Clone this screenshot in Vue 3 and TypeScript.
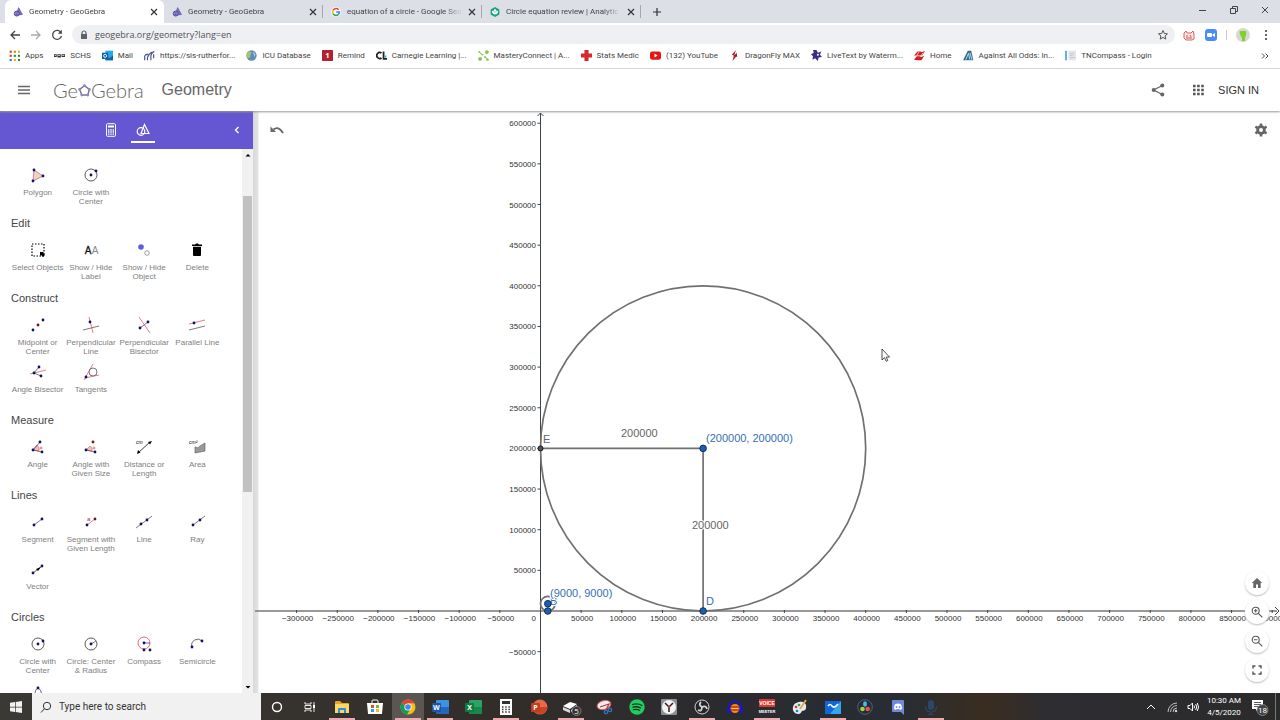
<script setup lang="ts">
import { ref } from 'vue'

interface Tool { label: string; icon: string }
interface Section { title: string; tools: Tool[] }
interface Tab { title: string; icon: string; active?: boolean; divider?: boolean }
interface Bookmark { label: string; icon: string }
interface TaskItem { name: string; icon: string; running?: boolean; focused?: boolean }

const address = ref('geogebra.org/geometry?lang=en')
const query = ref('')

/* ---------- browser tabs ---------- */
const geoIcon =
  '<path d="M9 1 15 12 5 13Z" fill="#7b72c4"/><circle cx="6" cy="10.500" r="4" fill="#8f88cf" stroke="#4b4392" stroke-width="1.500"/><path d="M9 1 15 12 5 13Z" fill="none" stroke="#5d54a6" stroke-width="1.200"/>'
const tabs: Tab[] = [
  { title: 'Geometry - GeoGebra', icon: geoIcon, active: true },
  { title: 'Geometry - GeoGebra', icon: geoIcon, divider: true },
  {
    title: 'equation of a circle - Google Search',
    divider: true,
    icon: '<circle cx="8" cy="8" r="8" fill="#fff"/><g fill="none" stroke-width="2.600"><path d="M12.200 4.300A5.500 5.500 0 0 0 3.300 5.200" stroke="#ea4335"/><path d="M3.300 5.200a5.500 5.500 0 0 0 0 5.600" stroke="#fbbc05"/><path d="M3.300 10.800a5.500 5.500 0 0 0 8.300 1.300" stroke="#34a853"/><path d="M11.600 12.100A5.500 5.500 0 0 0 13.500 8H8.200" stroke="#4285f4"/></g>',
  },
  {
    title: 'Circle equation review | Analytic geometry',
    divider: true,
    icon: '<path d="M8 0 15 4v8l-7 4-7-4V4Z" fill="#14a87c"/><circle cx="8" cy="5.500" r="2" fill="#fff"/><path d="M3 6c0 4 2 6 5 6s5-2 5-6c-3 0-5 1.500-5 4 0-2.500-2-4-5-4Z" fill="#fff"/>',
  },
]

/* ---------- bookmarks ---------- */
const dots = ['#d93025', '#e8710a', '#f9ab00', '#d93025', '#1e8e3e', '#1e8e3e', '#1a73e8', '#f9ab00', '#1e8e3e']
  .map((c, i) => `<rect x="${1 + (i % 3) * 6}" y="${1 + Math.floor(i / 3) * 6}" width="3" height="3" fill="${c}"/>`)
  .join('')
const bookmarks: Bookmark[] = [
  { label: 'Apps', icon: dots },
  { label: 'SCHS', icon: '<path d="M0 6h4v4H0zM5 6h5v5H5zM11 6h5v4h-5z" fill="#333"/><path d="M1 8h2M6 8h3M12 8h3" stroke="#fff"/>' },
  { label: 'Mail', icon: '<rect x="5" y="1" width="11" height="14" fill="#28a8ea"/><path d="m5 8 5.500 4L16 8v7H5Z" fill="#14649e"/><rect x="0" y="4" width="9" height="9" fill="#0a64ad"/><circle cx="4.500" cy="8.500" r="2.200" fill="none" stroke="#fff" stroke-width="1.300"/>' },
  { label: 'https://sis-rutherfor...', icon: '<path d="M1 15V9q1-3 5-3M5 15v-4q2-6 7-8M10 15V8q1-4 5-6M14 12V6" fill="none" stroke="#4c538f" stroke-width="1.700"/>' },
  { label: 'ICU Database', icon: '<circle cx="8" cy="8" r="7.500" fill="#5f8fb5"/><path d="M4 2c4 0 5 2 3 4s1 3-2 5-4-2-4-5Z" fill="#a6c66a"/><path d="M10 3c3 1 4 4 3 7Z" fill="#c6dff0"/>' },
  { label: 'Remind', icon: '<rect width="16" height="16" rx="1" fill="#b5202e"/><text x="8" y="12" text-anchor="middle" font-size="11" font-weight="700" font-family="Open Sans, sans-serif" fill="#fff">1</text>' },
  { label: 'Carnegie Learning |...', icon: '<path d="M8 4.500A4.300 4.300 0 1 0 8 11.500" fill="none" stroke="#222" stroke-width="2.600"/><path d="M11 2v11h5" fill="none" stroke="#222" stroke-width="2.600"/><rect x="12" y="8" width="3" height="3" fill="#3fa9dd"/>' },
  { label: 'MasteryConnect | A...', icon: '<g fill="#8cc152"><circle cx="2" cy="3" r="1.500"/><circle cx="13" cy="3" r="2.800"/><circle cx="3" cy="13" r="2.800"/><circle cx="14" cy="14" r="1.800"/><circle cx="7" cy="7" r="1.200"/><circle cx="10" cy="10" r="1.200"/></g><path d="m3 4 3 3M10 10l4 4" stroke="#8cc152" stroke-width="1.500"/>' },
  { label: 'Stats Medic', icon: '<path d="M5 0h6v5h5v6h-5v5H5v-5H0V5h5Z" fill="#d8292f"/>' },
  { label: '(132) YouTube', icon: '<rect y="2" width="16" height="12" rx="3" fill="#e81313"/><path d="m6.500 5 4.500 3-4.500 3Z" fill="#fff"/>' },
  { label: 'DragonFly MAX', icon: '<path d="M10 0 4 7l3 1-2 8 6-7-3-2Z" fill="#c4202d"/><path d="M11 4 8 8l4 2Z" fill="#7d1820"/>' },
  { label: 'LiveText by Waterm...', icon: '<path d="m8 0 2 4 5-2-2 5 3 3-5 1-1 5-4-4-4 2 1-5-3-3 4-2-1-4Z" fill="#3b2c84"/><circle cx="10" cy="7" r="1.500" fill="#fff"/>' },
  { label: 'Home', icon: '<path d="M0 8 5 2h4l3 1 4-2-4 7H0ZM0 14l4-5h4l3 1 4-2-4 7H5Z" fill="#cf2121"/><path d="m4 8 3-5M10 9l3-5" stroke="#fff"/>' },
  { label: 'Against All Odds: In...', icon: '<path d="M0 15 7 1h5l3 14Z" fill="#2f6c95"/><path d="m4 14 4-9 2 9M10 4l3 10" stroke="#cfe3ef" stroke-width="1.300" fill="none"/>' },
  { label: 'TNCompass - Login', icon: '<rect x="0" y="1" width="3" height="14" fill="#67b4d3"/><rect x="5" y="1" width="11" height="14" fill="#e3e5e8"/><path d="M7 5h6M7 8h4M7 11h7" stroke="#b6bac0"/>' },
]

/* ---------- construction tools ---------- */
const dot = (x: number, y: number, c = '#11116b') => `<circle cx="${x}" cy="${y}" r="1.400" fill="${c}"/>`
const line = (x1: number, y1: number, x2: number, y2: number, c = '#444') =>
  `<path d="M${x1} ${y1}L${x2} ${y2}" stroke="${c}" stroke-width=".7"/>`
const ring = (r: number, c = '#333') => `<circle r="${r}" fill="none" stroke="${c}" stroke-width=".8"/>`
const red = '#cf4a5c'

const sections: Section[] = [
  {
    title: '',
    tools: [
      { label: 'Polygon', icon: '<path d="M-4-5 5 1-5 6Z" fill="#f3d1cb" stroke="#a5645c" stroke-width=".7"/>' + dot(-4, -5) + dot(5, 1) + dot(-5, 6) },
      { label: 'Circle with Center', icon: ring(6) + dot(0, 0) + dot(5, -4) },
    ],
  },
  {
    title: 'Edit',
    tools: [
      { label: 'Select Objects', icon: '<rect x="-6" y="-6" width="12" height="12" fill="none" stroke="#000" stroke-width="1.200" stroke-dasharray="1.500 1.500"/><path d="M2 2h4L5 3l2 2-2 2-2-2-1 1Z"/>' },
      { label: 'Show / Hide Label', icon: '<g font-family="Liberation Sans, sans-serif" font-size="10" text-anchor="middle"><text x="-3" y="4" fill="#111" stroke="#111" stroke-width=".3">A</text><text x="4" y="4" fill="#888">A</text></g>' },
      { label: 'Show / Hide Object', icon: '<circle cx="-3" cy="-3" r="2.800" fill="#5f5fdd"/><circle cx="3" cy="3" r="2.300" fill="#fff" stroke="#777" stroke-width=".7"/>' },
      { label: 'Delete', icon: '<path d="M-5-5.500h3l1-1h2l1 1h3v1.500H-5ZM-4-3.300h8V5q0 1-1 1h-6q-1 0-1-1Z"/>' },
    ],
  },
  {
    title: 'Construct',
    tools: [
      { label: 'Midpoint or Center', icon: dot(-5, 5) + dot(0, 0, '#6b1722') + dot(5, -5) },
      { label: 'Perpendicular Line', icon: line(-8, 5, 8, 1) + line(-2, -8, 2, 8, red) + dot(-1, -3) },
      { label: 'Perpendicular Bisector', icon: line(-4, 3, 4, -3) + line(-5, -8, 6, 8, red) + dot(-4, 3) + dot(4, -3) },
      { label: 'Parallel Line', icon: line(-8, 5, 8, 1) + line(-8, -1, 8, -5, red) + dot(-3, -2) },
      { label: 'Angle Bisector', icon: line(-4, 1, 1, -5) + line(-4, 1, 3, 4) + line(-8, 2, 8, -2, red) + dot(-4, 1) + dot(1, -5) + dot(3, 4) },
      { label: 'Tangents', icon: '<circle cx="2" cy="0" r="4" fill="none" stroke="#555" stroke-width=".8"/>' + line(-7, 8, 2, -8, red) + line(-6, 6, 8, 3, red) + dot(-5, 5) },
    ],
  },
  {
    title: 'Measure',
    tools: [
      { label: 'Angle', icon: '<path d="M-5 3-1-2Q2 1 1 4Z" fill="#f5bfc1" stroke="#d15763" stroke-width=".6"/>' + line(-5, 3, 2, -5) + line(-5, 3, 4, 5) + dot(-5, 3) + dot(2, -5) + dot(4, 5) + '<circle cx="3" cy="1" r="1" fill="none" stroke="#c33" stroke-width=".6"/>' },
      { label: 'Angle with Given Size', icon: '<path d="M-5 3-1-1Q2 1 1 4Z" fill="#f5bfc1" stroke="#d15763" stroke-width=".6"/>' + line(-5, 3, 4, 5) + dot(-5, 3) + dot(2, -5, '#7e1020') + dot(4, 5) + '<circle cx="3" cy="1" r="1" fill="none" stroke="#c33" stroke-width=".6"/>' },
      { label: 'Distance or Length', icon: '<path d="M-6 6 6-5" stroke="#111" stroke-width=".8"/><path d="m-7 7 1-4 2.500 2.500ZM8-6 4-5l2 2.500Z"/><text x="-8" y="-3" font-family="Liberation Sans, sans-serif" font-size="5" font-style="italic">cm</text>' },
      { label: 'Area', icon: '<path d="M-2 0q3 2 5-1l5-3v8l-10 2Z" fill="#9a9a9a" stroke="#555" stroke-width=".6"/><text x="-8" y="-3" font-family="Liberation Sans, sans-serif" font-size="5" font-style="italic">cm²</text>' },
    ],
  },
  {
    title: 'Lines',
    tools: [
      { label: 'Segment', icon: line(-4, 3, 4, -3) + dot(-4, 3) + dot(4, -3) },
      { label: 'Segment with Given Length', icon: line(-4, 3, 4, -3, red) + dot(-4, 3) + dot(4, -3, '#7e1020') + '<text x="-4" y="-1" font-family="Liberation Sans, sans-serif" font-size="6" fill="#a33">a</text>' },
      { label: 'Line', icon: line(-8, 6, 8, -6) + dot(-3, 2) + dot(3, -2) },
      { label: 'Ray', icon: line(-4, 3, 8, -6) + dot(-4, 3) + dot(3, -2) },
      { label: 'Vector', icon: line(-5, 4, 4, -3, '#111') + '<path d="m3-2-5 2 2 2Z"/>' + dot(-5, 4) + dot(4, -3) },
    ],
  },
  {
    title: 'Circles',
    tools: [
      { label: 'Circle with Center', icon: ring(6) + dot(0, 0) + dot(5, -3) },
      { label: 'Circle: Center & Radius', icon: ring(6) + line(0, 0, 5, -3) + dot(0, 0) },
      { label: 'Compass', icon: '<circle cy="-1" r="6" fill="none" stroke="#d65f6e" stroke-width=".9"/>' + line(0, -1, 6, -1, '#22b') + dot(0, -1) + dot(0, 6) + dot(6, 6) },
      { label: 'Semicircle', icon: '<path d="M-5 3A6 6 0 0 1 5-3" fill="none" stroke="#444" stroke-width=".8"/>' + dot(-5, 3) + dot(5, -3) },
      { label: 'Circumcircular Arc', icon: '<path d="M-3 4Q-3-2 0-3 3-2 4 4" fill="none" stroke="#444" stroke-width=".8"/>' + dot(0, -3) },
    ],
  },
]

/* ---------- graphics view ---------- */
const origin = { x: 287.5, y: 500 }
const step = 40.65
const px = (v: number) => origin.x + (v / 50000) * step
const py = (v: number) => origin.y - (v / 50000) * step
const minus = (v: number) => (v < 0 ? '−' + -v : String(v))
const xTicks = Array.from({ length: 25 }, (_, i) => (i - 6) * 50000).filter((v) => v !== 0)
const yTicks = Array.from({ length: 14 }, (_, i) => (i - 1) * 50000).filter((v) => v !== 0)

/* ---------- taskbar ---------- */
const officeTile = (letter: string, dark: string, light: string) =>
  `<rect x="4" y="1" width="13" height="14" rx="1" fill="${light}"/><path d="M4 8h13v6q0 1-1 1H5q-1 0-1-1Z" fill="${dark}" opacity=".7"/><rect x="0" y="4" width="9" height="9" rx="1" fill="${dark}"/><text x="4.500" y="11" text-anchor="middle" font-size="7" font-weight="700" font-family="Open Sans, sans-serif" fill="#fff">${letter}</text>`
const taskItems: TaskItem[] = [
  { name: 'Cortana', icon: '<circle cx="8" cy="8" r="4.500" fill="none" stroke="#fff" stroke-width="1.400"/>' },
  { name: 'Task View', icon: '<path d="M3 3v2h6V3M3 13v-2h6v2M3 6.500h6v3H3ZM12 3v10" fill="none" stroke="#e8e8e8"/><path d="M11 6h2v3h-2z" fill="#fff"/>' },
  { name: 'File Explorer', running: true, icon: '<path d="M1 3q0-1 1-1h4l2 2h6q1 0 1 1v8H1Z" fill="#e5a51f"/><rect x="1" y="5" width="14" height="9" fill="#fbd767"/><path d="M4 14v-4q0-1 1-1h6q1 0 1 1v4h-2v-3H6v3Z" fill="#2f8fd6"/>' },
  { name: 'Microsoft Store', icon: '<path d="M5 4V2q0-1 1-1h4q1 0 1 1v2" fill="none" stroke="#fff"/><path d="M0 4h16l-1 11H1Z" fill="#fff"/><path d="M4 6h3v3H4z" fill="#e1512b"/><path d="M9 6h3v3H9z" fill="#7db928"/><path d="M4 10h3v3H4z" fill="#2b9fe2"/><path d="M9 10h3v3H9z" fill="#f4b71d"/>' },
  { name: 'Google Chrome', running: true, focused: true, icon: '<circle cx="8" cy="8" r="7.500" fill="#f4c20d"/><path d="M8 8 1.500 4.200A7.500 7.500 0 0 1 14.500 4.300H8Z" fill="#db4437"/><path d="M8 8 1.500 4.200A7.500 7.500 0 0 0 7 15.400L10.500 10Z" fill="#0f9d58"/><circle cx="8" cy="8" r="3.600" fill="#fff"/><circle cx="8" cy="8" r="2.800" fill="#4285f4"/>' },
  { name: 'Word', running: true, icon: officeTile('W', '#1c55a8', '#3b93e4') },
  { name: 'Excel', icon: officeTile('X', '#107c41', '#28a467') },
  { name: 'Calculator', running: true, icon: '<rect x="2" y="0" width="12" height="16" fill="#fff"/><path d="M4 2h8v3H4z" fill="#333"/><path d="M4 8h8M4 10.500h8M4 13h8" stroke="#333" stroke-width="1.500" stroke-dasharray="1.500 1.700"/>' },
  { name: 'PowerPoint', icon: '<circle cx="9" cy="8" r="7.500" fill="#e8694a"/><path d="M9 8h7.500A7.500 7.500 0 0 1 3 12Z" fill="#c8432a"/><rect x="0" y="4" width="9" height="9" rx="1" fill="#c43e1c"/><text x="4.500" y="11" text-anchor="middle" font-size="7" font-weight="700" font-family="Open Sans, sans-serif" fill="#fff">P</text>' },
  { name: 'Document Camera', running: true, icon: '<path d="m0 7 7-4 7 2-7 5Z" fill="#fff"/><path d="m0 8 7 3v3l-7-3ZM8 11l6-5v2l-6 5Z" fill="#d8d8d8"/><circle cx="13.500" cy="12" r="4.500" fill="#333" stroke="#999" stroke-width=".7"/><text x="13.500" y="15" text-anchor="middle" font-size="8" font-family="Open Sans, sans-serif" fill="#fff">5</text>' },
  { name: 'Snipping Tool', icon: '<ellipse cx="8" cy="6" rx="7" ry="4.500" fill="#eee" stroke="#d4585d" transform="rotate(-15 8 6)"/><path d="m4 8 9-3-3 6" stroke="#b9343f" stroke-width="1.300" fill="none"/><circle cx="10" cy="13" r="1.700" fill="none" stroke="#2e74b8" stroke-width="1.300"/><circle cx="14" cy="11" r="1.700" fill="none" stroke="#2e74b8" stroke-width="1.300"/>' },
  { name: 'Spotify', icon: '<circle cx="8" cy="8" r="7.700" fill="#1fce5f"/><path d="M3.500 5.500q5-1.500 9.500 1M4 8.200q4-1.200 7.500.8M4.500 10.700q3.500-1 6 .6" fill="none" stroke="#10311d" stroke-width="1.300" stroke-linecap="round"/>' },
  { name: 'Clock', icon: '<rect width="16" height="16" rx="1" fill="#8c8f94"/><circle cx="8" cy="8" r="7" fill="#f3f3f3"/><path d="m4 4 4 4 4-4M8 8v5" fill="none" stroke="#222" stroke-width="1.500"/><circle cx="8" cy="8" r="1.200" fill="#c33"/>' },
  { name: 'OBS Studio', running: true, icon: '<circle cx="8" cy="8" r="7" fill="#262629" stroke="#d5d5d5"/><path d="M8 8Q4 6 7 3M8 8q4-2 5 2M8 8q0 5-4 3" fill="none" stroke="#d5d5d5" stroke-width="1.800"/>' },
  { name: 'Audacity', icon: '<path d="M2 11V8a6 6 0 0 1 12 0v3" fill="none" stroke="#1717c9" stroke-width="2"/><rect x="0" y="8" width="4" height="6" rx="1" fill="#1717c9"/><rect x="12" y="8" width="4" height="6" rx="1" fill="#1717c9"/><circle cx="8" cy="9.500" r="4.500" fill="#f28b17"/><path d="M4 8h8M4 11h8" stroke="#d82a17" stroke-width="1.500"/><path d="M5 9.500h6" stroke="#ffe14a"/>' },
  { name: 'VoiceMeeter', running: true, icon: '<rect width="16" height="8" fill="#d93a2b"/><rect y="8" width="16" height="8" fill="#292c32"/><g font-family="Liberation Sans, sans-serif" font-weight="700" text-anchor="middle" fill="#fff"><text x="8" y="6" font-size="5">VOICE</text><text x="8" y="14" font-size="4">MEETER</text></g>' },
  { name: 'Paint', icon: '<path d="M7 3c5-1 8 2 7 6s-3 2-4 3-1 3-4 3-6-3-5-7 3-4 6-5Z" fill="#e2edf0"/><circle cx="4" cy="8" r="1.300" fill="#d33"/><circle cx="7" cy="6" r="1.300" fill="#3a9e4c"/><circle cx="5" cy="12" r="1.300" fill="#2b74cf"/><path d="m8 10 6-9" stroke="#e0a84c" stroke-width="1.800"/>' },
  { name: 'Whiteboard', running: true, icon: '<rect y="2" width="16" height="13" fill="#1267d8"/><path d="M16 2v13H5Z" fill="#34a6ee"/><path d="M3 7q2-3 4 0t6-2" fill="none" stroke="#fff" stroke-width="1.500"/>' },
  { name: 'DaVinci Resolve', icon: '<circle cx="8" cy="8" r="7.300" fill="#232c38" stroke="#56606e"/><ellipse cx="8" cy="5" rx="2" ry="2.700" fill="#50b6e5"/><circle cx="5.500" cy="10" r="2.300" fill="#a9cf45"/><circle cx="10.700" cy="10" r="2.300" fill="#e0574b"/>' },
  { name: 'Discord', icon: '<path d="M3 1h10q1 0 1 1v14l-3-3H3q-1 0-1-1V2q0-1 1-1Z" fill="#7289da"/><path d="M4 10q0-4 1.500-5 2.500-.8 5 0Q12 6 12 10l-2 1-.7-1H6.700L6 11Z" fill="#fff"/><circle cx="6.500" cy="8" r=".9" fill="#7289da"/><circle cx="9.500" cy="8" r=".9" fill="#7289da"/>' },
  { name: 'Voice Recorder', running: true, icon: '<rect x="5" y="1" width="6" height="10" rx="3" fill="#2c4763"/><path d="M2.500 7q0 6 5.500 6t5.500-6M8 13v3M5 15.500h6" fill="none" stroke="#2c4763" stroke-width="1.200"/>' },
]
</script>

<template>
  <div class="screen">
    <nav class="tab-strip" aria-label="Browser tabs">
      <div v-for="(t, i) in tabs" :key="i" class="tab" :class="{ active: t.active, divider: t.divider }">
        <svg class="favicon" viewBox="0 0 16 16" v-html="t.icon" />
        <a class="tab-title" href="#">{{ t.title }}</a>
        <button class="tab-close" aria-label="Close tab">
          <svg viewBox="0 0 8 8"><path d="m1 1 6 6M7 1 1 7" /></svg>
        </button>
      </div>
      <button class="new-tab" aria-label="New tab">
        <svg viewBox="0 0 10 10"><path d="M5 1v8M1 5h8" /></svg>
      </button>
      <div class="window-controls">
        <button aria-label="Minimize"><svg viewBox="0 0 10 10"><path d="M1 5.500h7" /></svg></button>
        <button aria-label="Restore"><svg viewBox="0 0 10 10"><path d="M1.500 3.500h5v5h-5zM3.500 3V1.500h5v5H7" /></svg></button>
        <button aria-label="Close"><svg viewBox="0 0 10 10"><path d="m2 2 6 6M8 2 2 8" /></svg></button>
      </div>
    </nav>

    <div class="toolbar">
      <button class="nav-button" aria-label="Back"><svg viewBox="0 0 12 12"><path d="M11 6H2M6 2 2 6l4 4" /></svg></button>
      <button class="nav-button faded" aria-label="Forward"><svg viewBox="0 0 12 12"><path d="M1 6h9M6 2l4 4-4 4" /></svg></button>
      <button class="nav-button" aria-label="Reload">
        <svg viewBox="0 0 12 12"><path d="M10 3.500A4.500 4.500 0 1 0 10.500 7" /><path d="M10.800.8v4H6.800Z" class="solid" /></svg>
      </button>
      <div class="omnibox">
        <svg class="lock" viewBox="0 0 10 10"><path d="M3 4V3a2 2 0 0 1 4 0v1" fill="none" stroke="#5f6368" stroke-width="1.200" /><rect x="2" y="4" width="6" height="5" fill="#5f6368" /></svg>
        <input v-model="address" type="text" aria-label="Address" />
        <button class="star" aria-label="Bookmark this page">
          <svg viewBox="0 0 12 12"><path d="m6 1.500 1.300 3 3.200.3-2.400 2.100.7 3.200L6 8.400l-2.800 1.700.7-3.200-2.400-2.100 3.200-.3Z" /></svg>
        </button>
      </div>
      <div class="extensions">
        <button aria-label="Extension">
          <svg viewBox="0 0 12 12"><path d="M1 4l2-2 1 2h4l2-2 1 3v5l-2 1H3l-2-2Z" fill="#fae9e8" stroke="#d1504d" stroke-width=".9" /><path d="M4 6v2M7 6l1 2M3 9h6" stroke="#d1504d" /></svg>
        </button>
        <button aria-label="Zoom meeting">
          <svg viewBox="0 0 12 12"><rect width="12" height="12" rx="3" fill="#4a8cf5" /><rect x="2" y="4" width="5" height="4" rx="1" fill="#fff" /><path d="m7.500 5.500 2.500-1.500v4L7.500 6.500Z" fill="#fff" /></svg>
        </button>
        <i class="rule"></i>
        <button class="avatar" aria-label="Profile">
          <svg viewBox="0 0 14 14"><circle cx="7" cy="7" r="7" fill="#d5d7d5" /><path d="M4 3h6q1 3-1 7v3H6v-3Q3 6 4 3Z" fill="#7ed321" /></svg>
        </button>
        <button aria-label="Menu">
          <svg viewBox="0 0 12 12"><circle cx="6" cy="2" r="1.100" fill="#444" /><circle cx="6" cy="6" r="1.100" fill="#444" /><circle cx="6" cy="10" r="1.100" fill="#444" /></svg>
        </button>
      </div>
    </div>

    <nav class="bookmarks" aria-label="Bookmarks">
      <a v-for="b in bookmarks" :key="b.label" href="#"><svg viewBox="0 0 16 16" v-html="b.icon" /><span>{{ b.label }}</span></a>
      <button class="more" aria-label="More bookmarks"><svg viewBox="0 0 8 8"><path d="m1 1.500 2.500 2.500L1 6.500M4.500 1.500 7 4 4.500 6.500" /></svg></button>
    </nav>

    <header class="app-header">
      <button class="menu" aria-label="Menu"><svg viewBox="0 0 12 10"><path d="M0 1.500h12M0 5h12M0 8.500h12" /></svg></button>
      <a class="logo" href="#" aria-label="GeoGebra">
        <span>Ge</span>
        <svg viewBox="0 0 12 12"><path d="M6 1.500 10.500 5 9 10.200H3.500L1.500 5Z" fill="none" stroke="#777" stroke-width="1.300" /><g fill="#8c84dc"><circle cx="6" cy="1.500" r="1.300" /><circle cx="10.500" cy="5" r="1.300" /><circle cx="9" cy="10.200" r="1.300" /><circle cx="3.500" cy="10.200" r="1.300" /><circle cx="1.500" cy="5" r="1.300" /></g></svg>
        <span>Gebra</span>
      </a>
      <h1>Geometry</h1>
      <div class="header-actions">
        <button aria-label="Share">
          <svg viewBox="0 0 14 14"><path d="m11.500 2.500-9 4.500 9 4.500" fill="none" stroke="#666" stroke-width="1.300" /><g fill="#666"><circle cx="11.300" cy="2.500" r="2" /><circle cx="2.700" cy="7" r="2" /><circle cx="11.300" cy="11.500" r="2" /></g></svg>
        </button>
        <button class="apps" aria-label="Apps">
          <svg viewBox="0 0 14 14"><path d="M2 3h11M2 7h11M2 11h11" stroke="#555" stroke-width="2.600" stroke-dasharray="2.600 1.500" /></svg>
        </button>
        <a class="sign-in" href="#">SIGN IN</a>
      </div>
    </header>

    <main class="workspace">
      <aside class="sidebar">
        <div class="sidebar-head">
          <button class="view-tab" aria-label="Algebra">
            <svg viewBox="0 0 14 14"><rect x="2.500" y=".7" width="9" height="12.600" rx="1" fill="none" stroke="#fff" /><path d="M4 2.500h6v2H4z" fill="#fff" /><path d="M4 7h6M4 9h6M4 11.200h6" stroke="#fff" stroke-width="1.300" stroke-dasharray="1.400 .9" /></svg>
          </button>
          <button class="view-tab selected" aria-label="Tools">
            <svg viewBox="0 0 14 14"><circle cx="5" cy="8.500" r="3.800" fill="none" stroke="#fff" stroke-width="1.200" /><path d="M8.500 1.500 13 10.500H5Z" fill="none" stroke="#fff" stroke-width="1.200" /></svg>
          </button>
          <button class="collapse" aria-label="Collapse"><svg viewBox="0 0 8 10"><path d="M5.500 2 2.500 5l3 3" fill="none" stroke="#fff" stroke-width="1.400" /></svg></button>
        </div>
        <div class="sidebar-body">
          <div class="tool-list">
            <section v-for="(s, i) in sections" :key="i">
              <h2 v-if="s.title">{{ s.title }}</h2>
              <div class="tool-grid">
                <button v-for="tool in s.tools" :key="tool.label" class="tool">
                  <svg viewBox="-10 -10 20 20" v-html="tool.icon" />
                  <span>{{ tool.label }}</span>
                </button>
              </div>
            </section>
          </div>
          <div class="scrollbar" aria-hidden="true">
            <svg viewBox="0 0 8 8"><path d="M1.500 5.500h5L4 3Z" /></svg>
            <div class="track"><div class="thumb"></div></div>
            <svg viewBox="0 0 8 8"><path d="M1.500 3h5L4 5.500Z" /></svg>
          </div>
        </div>
      </aside>

      <div class="graphics">
        <svg class="plot" aria-label="Graphics view">
          <line class="x-axis" x1="2" :y1="origin.y" x2="1024" :y2="origin.y" />
          <path class="tick" d="m1022 496 4 4-4 4" />
          <line class="tick" :x1="origin.x" y1="2" :x2="origin.x" y2="582" />
          <path class="tick" :d="`M${origin.x - 3} 5l3-3 3 3`" />
          <g class="axis-label">
            <g v-for="v in xTicks" :key="'x' + v">
              <line class="tick" :x1="px(v)" y1="499" :x2="px(v)" y2="502" />
              <text :x="px(v) + 1" y="510" text-anchor="middle">{{ minus(v) }}</text>
            </g>
            <g v-for="v in yTicks" :key="'y' + v">
              <line class="tick" :x1="origin.x - 3" :y1="py(v)" :x2="origin.x" :y2="py(v)" />
              <text x="283" :y="py(v) + 3" text-anchor="end">{{ minus(v) }}</text>
            </g>
            <text x="283" y="510" text-anchor="end">0</text>
          </g>

          <circle class="curve" :cx="px(200000)" :cy="py(200000)" :r="step * 4" />
          <circle class="curve" :cx="px(9000)" :cy="py(9000)" :r="step * 9 / 50" />
          <line class="curve" :x1="px(0)" :y1="py(200000)" :x2="px(200000)" :y2="py(200000)" />
          <line class="curve" :x1="px(200000)" :y1="py(200000)" :x2="px(200000)" :y2="py(0)" />

          <g class="halo measure">
            <text x="368" y="326">200000</text>
            <text x="439" y="418">200000</text>
            <text x="290" y="332">E</text>
          </g>
          <g class="halo named">
            <text x="453" y="331">(200000, 200000)</text>
            <text x="453" y="494">D</text>
            <text x="297" y="494">B</text>
            <text x="297" y="486">(9000, 9000)</text>
          </g>
          <circle class="derived" :cx="px(0)" :cy="py(200000)" r="2.500" />
          <g class="free">
            <circle :cx="px(200000)" :cy="py(200000)" r="3.300" />
            <circle :cx="px(200000)" :cy="py(0)" r="3.300" />
            <circle :cx="px(9000)" :cy="py(9000)" r="3.300" />
            <circle :cx="px(9000)" :cy="py(0)" r="3.300" />
          </g>
          <path class="pointer" d="M629 238v11l2.500-2.300 1.700 3.600 1.600-.8-1.600-3.400h3.300Z" />
        </svg>

        <div class="canvas-top">
          <button aria-label="Undo"><svg viewBox="0 0 14 14"><path d="M3.500 6.500q5-4 9.500 3.500" fill="none" stroke="#666" stroke-width="1.900" /><path d="M.5 3.500v5.500H6Z" fill="#666" /></svg></button>
          <button aria-label="Settings">
            <svg viewBox="0 0 14 14"><circle cx="7" cy="7" r="3.400" fill="none" stroke="#666" stroke-width="2.800" /><path d="M7 .5v2.500M7 11v2.500M1.400 3.700l2.100 1.300M10.500 9l2.100 1.300M1.400 10.300 3.500 9M10.500 5l2.100-1.300" stroke="#666" stroke-width="2.600" /></svg>
          </button>
        </div>

        <div class="zoom-buttons">
          <button aria-label="Home"><svg viewBox="0 0 12 12"><path d="M6 1 .8 6H2.300v5H5V7.500h2V11h2.700V6h1.500Z" fill="#666" /></svg></button>
          <button aria-label="Zoom in"><svg viewBox="0 0 12 12"><circle cx="4.700" cy="4.700" r="3.500" /><path d="m7.300 7.300 4 4M3 4.700h3.400M4.700 3v3.400" /></svg></button>
          <button aria-label="Zoom out"><svg viewBox="0 0 12 12"><circle cx="4.700" cy="4.700" r="3.500" /><path d="m7.300 7.300 4 4M3 4.700h3.400" /></svg></button>
          <button aria-label="Fullscreen"><svg viewBox="0 0 12 12"><path d="M2 4.500V2h2.500M7.500 2H10v2.500M10 7.500V10H7.500M4.500 10H2V7.500" stroke-width="1.400" /></svg></button>
        </div>
      </div>
    </main>

    <footer class="taskbar">
      <button class="start" aria-label="Start">
        <svg viewBox="0 0 12 12"><path d="M0 1.800 5 1v4.700H0ZM5.700.9 12 0v5.700H5.700ZM0 6.400h5V11l-5-.7ZM5.700 6.400H12V12l-6.300-.9Z" fill="#f2f2f2" /></svg>
      </button>
      <label class="search">
        <svg viewBox="0 0 12 12"><circle cx="7" cy="5" r="3.700" /><path d="M4.400 7.800 1 11.500" /></svg>
        <input v-model="query" type="text" placeholder="Type here to search" aria-label="Type here to search" />
      </label>
      <div class="task-items">
        <button v-for="t in taskItems" :key="t.name" class="task" :class="{ running: t.running, focused: t.focused }" :aria-label="t.name">
          <svg viewBox="0 0 16 16" v-html="t.icon" />
        </button>
      </div>
      <div class="tray">
        <button aria-label="Show hidden icons"><svg viewBox="0 0 12 12"><path d="m2 8 4-4 4 4" /></svg></button>
        <button aria-label="Network"><svg viewBox="0 0 12 12"><path d="M2 11A9 9 0 0 1 11 2M4.500 11A6.500 6.500 0 0 1 11 4.500M7 11a4 4 0 0 1 4-4" opacity=".7" /><circle cx="10" cy="10" r=".8" /></svg></button>
        <button aria-label="Volume"><svg viewBox="0 0 12 12"><path d="M1 4.500h2L5.500 2v8L3 7.500H1ZM7 4.500q1 1.500 0 3M8.700 3q2 3 0 6M10.300 2q2.500 4 0 8" /></svg></button>
        <div class="clock"><span>10:30 AM</span><span>4/5/2020</span></div>
        <button class="notices" aria-label="Notifications">
          <svg viewBox="0 0 18 18"><path d="M1 2h11v9H7l-2 2v-2H1Z" fill="#fff" stroke="none" /><path d="M3 4.500h7M3 6.500h7M3 8.500h5" stroke="#333" stroke-width=".8" /><circle cx="11.500" cy="12" r="5.500" fill="#444" stroke="#999" stroke-width=".7" /><text x="11.500" y="15" text-anchor="middle">18</text></svg>
        </button>
        <i class="peek"></i>
      </div>
    </footer>
  </div>
</template>

<style>
body {
  margin: 0;
  overflow: hidden;
}
</style>

<style scoped>
.screen {
  display: flex;
  flex-direction: column;
  height: 100vh;
  background: #fff;
  color: #444;
  font-family: "Open Sans", "Noto Sans", sans-serif;
  font-size: 8px;
}
button {
  display: flex;
  align-items: center;
  justify-content: center;
  margin: 0;
  padding: 0;
  border: 0;
  background: none;
  color: inherit;
  font: inherit;
}
a {
  color: inherit;
  text-decoration: none;
}
input {
  flex: 1;
  min-width: 0;
  padding: 0;
  border: 0;
  outline: 0;
  background: none;
  color: inherit;
  font: inherit;
}
svg {
  display: block;
  flex: none;
}

/* tab strip */
.tab-strip {
  display: flex;
  flex: none;
  height: 23px;
  padding-left: 5px;
  background: #dcdfe6;
  font-family: Roboto, sans-serif;
}
.tab {
  position: relative;
  display: flex;
  align-items: center;
  gap: 6px;
  flex: 0 1 159px;
  min-width: 0;
  box-sizing: border-box;
  padding: 0 6px 0 8px;
}
.tab.active {
  border-radius: 6px 6px 0 0;
  background: #fff;
}
.tab.divider::after {
  content: "";
  position: absolute;
  right: 0;
  top: 5px;
  width: 1px;
  height: 13px;
  background: #a5a8ae;
}
.favicon {
  width: 10px;
  height: 10px;
}
.tab-title {
  flex: 1;
  overflow: hidden;
  white-space: nowrap;
  mask-image: linear-gradient(to right, #000 85%, transparent);
}
.tab-close svg {
  width: 8px;
  height: 8px;
}
.new-tab {
  width: 32px;
}
.new-tab svg {
  width: 10px;
  height: 10px;
}
.tab-strip button path {
  fill: none;
  stroke: #333;
  stroke-width: 1.2;
}
.window-controls {
  display: flex;
  height: 19px;
  margin-left: auto;
}
.window-controls button {
  width: 31px;
}
.window-controls svg {
  width: 10px;
  height: 10px;
}
.tab-strip .window-controls path {
  stroke-width: 0.9;
}

/* toolbar */
.toolbar {
  display: flex;
  align-items: center;
  flex: none;
  height: 23px;
  padding: 0 4px;
}
.nav-button {
  width: 21px;
}
.nav-button svg {
  width: 12px;
  height: 12px;
  fill: none;
  stroke: #444;
  stroke-width: 1.3;
}
.nav-button .solid {
  fill: #444;
  stroke: none;
}
.faded svg {
  stroke: #aaa;
}
.omnibox {
  display: flex;
  align-items: center;
  flex: 1;
  height: 19px;
  margin-left: 5px;
  padding: 0 6px;
  border-radius: 10px;
  background: #eff0f3;
  color: #4f5257;
  font-size: 9px;
}
.lock {
  width: 10px;
  height: 10px;
  margin: 0 6px 0 1px;
}
.star svg {
  width: 12px;
  height: 12px;
  fill: none;
  stroke: #555;
}
.extensions {
  display: flex;
  align-items: center;
  gap: 10px;
  padding: 0 4px 0 8px;
}
.extensions svg {
  width: 12px;
  height: 12px;
}
.extensions .avatar svg {
  width: 14px;
  height: 14px;
}
.rule {
  width: 1px;
  height: 10px;
  margin: 0 -1px;
  background: #ccc;
}

/* bookmarks */
.bookmarks {
  display: flex;
  align-items: center;
  gap: 11px;
  flex: none;
  height: 19px;
  padding: 0 11px 3px 9px;
  border-bottom: 1px solid #dcdcdc;
  font-family: Roboto, sans-serif;
  white-space: nowrap;
}
.bookmarks a {
  display: flex;
  align-items: center;
  gap: 5px;
  height: 19px;
}
.bookmarks a svg {
  width: 11px;
  height: 11px;
}
.more {
  margin-left: auto;
}
.more svg {
  width: 8px;
  height: 8px;
  fill: none;
  stroke: #444;
}

/* application header */
.app-header {
  position: relative;
  z-index: 2;
  display: flex;
  align-items: center;
  flex: none;
  height: 42px;
  padding: 0 21px 0 18px;
  box-shadow: 0 1px 2px #999;
  background: #fff;
  color: #666;
}
.menu svg {
  width: 12px;
  height: 10px;
  stroke: #666;
  stroke-width: 1.3;
}
.logo {
  display: flex;
  align-items: center;
  margin-left: 23px;
  font: 300 20px/24px Lato, sans-serif;
}
.logo svg {
  width: 13px;
  height: 13px;
}
h1 {
  margin: 0 0 0 18px;
  font: 400 16px/24px "Liberation Sans", Arial, sans-serif;
}
.header-actions {
  display: flex;
  align-items: center;
  margin-left: auto;
}
.header-actions svg {
  width: 14px;
  height: 14px;
}
.apps {
  margin: 0 13px 0 26px;
}
.sign-in {
  color: #333;
  font: 11px/16px "Liberation Sans", Arial, sans-serif;
}

/* workspace */
.workspace {
  display: flex;
  flex: 1;
  min-height: 0;
  font-family: "Liberation Sans", Arial, sans-serif;
}
.sidebar {
  display: flex;
  flex-direction: column;
  flex: none;
  width: 253px;
}
.sidebar-head {
  display: flex;
  flex: none;
  height: 38px;
  padding-left: 99px;
  background: #6557d2;
}
.view-tab {
  position: relative;
  width: 24px;
  margin-right: 8px;
}
.view-tab svg {
  width: 14px;
  height: 14px;
}
.view-tab.selected::after {
  content: "";
  position: absolute;
  right: 0;
  bottom: 6px;
  left: 0;
  height: 2px;
  background: #fff;
}
.collapse {
  width: 32px;
  margin-left: auto;
}
.collapse svg {
  width: 8px;
  height: 10px;
}
.sidebar-body {
  display: flex;
  flex: 1;
  min-height: 0;
}
.tool-list {
  flex: 1;
  overflow: hidden;
  padding: 13px 18px 0 11px;
}
h2 {
  margin: 0;
  color: #444;
  font-size: 11px;
  font-weight: 400;
  line-height: 28px;
}
.tool-grid {
  display: grid;
  grid-template-columns: repeat(4, minmax(0, 1fr));
}
.tool {
  flex-direction: column;
  justify-content: flex-start;
  height: 47px;
  color: #808080;
  line-height: 9px;
  text-align: center;
}
.tool svg {
  width: 20px;
  height: 20px;
  margin: 3px 0;
}
.scrollbar {
  display: flex;
  flex-direction: column;
  align-items: center;
  width: 11px;
  background: #f1f1f1;
}
.scrollbar svg {
  width: 8px;
  height: 12px;
}
.track {
  flex: 1;
  align-self: stretch;
  margin: 0 1px;
}
.thumb {
  height: 57%;
  margin-top: 35px;
  background: #c1c1c1;
}

/* graphics view */
.graphics {
  position: relative;
  flex: 1;
  min-width: 0;
  overflow: hidden;
  background: linear-gradient(to right, #d8d8d8, #e4e4e4 5px, #fff 6px);
}
.plot {
  position: absolute;
  inset: 0;
  width: 100%;
  height: 100%;
}
.x-axis {
  stroke: #777;
  stroke-width: 1.4;
}
.tick {
  fill: none;
  stroke: #444;
  stroke-width: 1;
}
.axis-label text {
  fill: #333;
  font-size: 8px;
}
.curve {
  fill: none;
  stroke: #707070;
  stroke-width: 1.7;
}
.halo text {
  font-size: 11px;
  stroke: #fff;
  stroke-width: 2;
  paint-order: stroke;
}
.measure {
  fill: #666;
}
.named {
  fill: #3470b5;
}
.derived {
  fill: #555;
  stroke: #111;
}
.free circle {
  fill: #1c5fb0;
  stroke: #12305a;
}
.pointer {
  fill: #fff;
  stroke: #222;
  stroke-width: 0.8;
}
.canvas-top {
  position: absolute;
  top: 12px;
  right: 12px;
  left: 17px;
  display: flex;
  justify-content: space-between;
}
.canvas-top svg {
  width: 14px;
  height: 14px;
}
.zoom-buttons {
  position: absolute;
  right: 11px;
  bottom: 11px;
  display: flex;
  flex-direction: column;
  gap: 5px;
}
.zoom-buttons button {
  width: 24px;
  height: 24px;
  border-radius: 50%;
  box-shadow: 0 1px 2px #bbb;
  background: #fff;
}
.zoom-buttons svg {
  width: 12px;
  height: 12px;
}
.zoom-buttons button + button svg {
  fill: none;
  stroke: #555;
  stroke-width: 1.1;
}

/* taskbar */
.taskbar {
  position: relative;
  z-index: 1;
  display: flex;
  flex: none;
  height: 27px;
  background: linear-gradient(to right, #3b3933, #322d29 40%, #2b2b2f 55%, #272d33 70%, #3a2d20 77%, #2d2d32 82%, #2b2b2b);
}
.start {
  width: 32px;
}
.start svg {
  width: 12px;
  height: 12px;
}
.search {
  display: flex;
  align-items: center;
  gap: 7px;
  width: 221px;
  box-sizing: content-box;
  padding-left: 8px;
  background: #f1f1f1;
  color: #333;
  font: 10px Roboto, sans-serif;
}
.search svg {
  width: 12px;
  height: 12px;
  fill: none;
  stroke: #333;
}
.search input::placeholder {
  color: #333;
  opacity: 1;
}
.task-items {
  display: flex;
  justify-content: space-between;
  flex: 0 1 686px;
}
.task {
  position: relative;
  width: 32px;
}
.task svg {
  width: 16px;
  height: 16px;
  overflow: visible;
}
.task.focused {
  background: #5b5652;
}
.task.running::after {
  content: "";
  position: absolute;
  right: 3px;
  bottom: 0;
  left: 3px;
  height: 2px;
  background: #eeabae;
}
.tray {
  display: flex;
  align-items: center;
  margin-left: auto;
  color: #fff;
  font-family: Roboto, sans-serif;
}
.tray button {
  width: 21px;
}
.tray svg {
  width: 12px;
  height: 12px;
  fill: none;
  stroke: #fff;
}
.clock {
  display: flex;
  flex-direction: column;
  width: 42px;
  line-height: 12px;
  text-align: center;
}
.tray .notices {
  width: 30px;
}
.notices svg {
  width: 18px;
  height: 18px;
}
.notices text {
  fill: #fff;
  stroke: none;
  font-size: 8px;
}
.peek {
  align-self: stretch;
  width: 4px;
  border-left: 1px solid #777;
}
</style>
